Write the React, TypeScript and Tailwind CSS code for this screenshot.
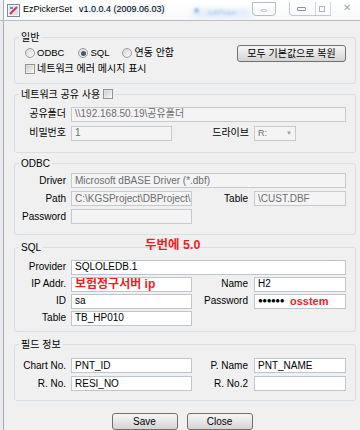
import React from "react";

const font = "font-['Liberation_Sans','Noto_Sans_CJK_KR',sans-serif]";

type BoxProps = {
  label: React.ReactNode;
  className: string;
  children: React.ReactNode;
};

const GroupBox = ({ label, className, children }: BoxProps) => {
  return (
    <div className={`relative border border-[#d5dfe5] rounded-[3px] ${className}`}>
      <div className="absolute -top-[7px] left-[4px] flex items-center gap-[3px] bg-[#f0f0f0] px-[2px] text-[10px] leading-[13px] text-black">
        {label}
      </div>
      {children}
    </div>
  );
};

const Field = ({
  value,
  disabled,
  className,
  children,
}: {
  value?: string;
  disabled?: boolean;
  className: string;
  children?: React.ReactNode;
}) => {
  return (
    <div
      className={`h-[15px] flex items-center px-[3px] border text-[10px] leading-none whitespace-nowrap overflow-hidden ${
        disabled
          ? "bg-[#f4f4f4] border-[#c6cacf] text-[#6d6d6d]"
          : "bg-white border-[#bfc5cc] text-black"
      } ${className}`}
    >
      {value}
      {children}
    </div>
  );
};

const Label = ({ text, className }: { text: string; className: string }) => (
  <span className={`text-[10px] leading-none text-right text-black whitespace-nowrap ${className}`}>
    {text}
  </span>
);

const Radio = ({ checked }: { checked?: boolean }) => (
  <span className="w-[10px] h-[10px] rounded-full border border-[#9b9b9b] bg-gradient-to-br from-[#d8d8d8] to-[#fbfbfb] flex items-center justify-center">
    {checked && <span className="w-[5px] h-[5px] rounded-full bg-[#3f5873]" />}
  </span>
);

const Check = () => (
  <span className="w-[10px] h-[10px] border border-[#949494] bg-gradient-to-br from-[#dcdcdc] to-[#f9f9f9] flex items-center justify-center">
    <span className="w-[6px] h-[6px] bg-gradient-to-br from-[#cfcfcf] to-[#f3f3f3]" />
  </span>
);

const Row = ({ children, className = "" }: { children: React.ReactNode; className?: string }) => (
  <div className={`flex items-center ${className}`}>{children}</div>
);

const App = () => {
  return (
    <div className={`w-[360px] h-[430px] overflow-hidden bg-[#f0f0f0] ${font}`}>
      {/* title bar */}
      <div className="h-[21px] flex items-center bg-gradient-to-b from-white to-[#f7f9fb] border-b border-[#b9bcc0] relative">
        <div className="w-[4px] h-full border-r border-[#a8abb0] bg-[#eef0f2]" />
        <svg width="13" height="13" viewBox="0 0 13 13" className="ml-[3px]">
          <rect x="0.5" y="0.5" width="12" height="12" fill="#f4f6fa" stroke="#7c8aa0" />
          <rect x="2" y="2" width="9" height="9" fill="#d7e3f3" />
          <path d="M3 10 L10 3" stroke="#d23a3a" strokeWidth="2" />
          <path d="M3 4 L6 4" stroke="#3a6fc4" strokeWidth="1.5" />
        </svg>
        <span className="ml-[3px] text-[9px] text-black whitespace-nowrap">EzPickerSet</span>
        <span className="ml-[7px] text-[9px] text-black whitespace-nowrap [text-shadow:0_0_3px_#b7d4f5]">
          v1.0.0.4 (2009.06.03)
        </span>
        <span className="absolute left-[192px] top-[9px] w-[60px] h-[9px] rounded-full bg-[#d6e6f8] blur-[3px] opacity-70" />
        <span className="absolute left-[194px] top-[8px] w-[5px] h-[5px] rounded-full bg-[#9fc3ea] blur-[1px]" />
        <span className="absolute left-[208px] top-[8px] text-[6.5px] text-[#a9c8ec] blur-[0.8px]">softPicker</span>
        <div className="absolute left-[252px] top-[2px] w-[24px] h-[14px] border border-[#b8bcc2] rounded-b-[4px] flex items-center justify-center text-[11px] leading-none text-[#7d8188]">
          ⇔
        </div>
        <div className="absolute left-[289px] top-[2px] w-[42px] h-[14px] border-l border-b border-[#c4c7cc] rounded-bl-[4px] flex items-center">
          <span className="ml-[7px] w-[9px] h-[4px] border border-[#8d9197] rounded-[1px]" />
          <span className="ml-[9px] w-px h-full bg-[#d3d6da]" />
          <span className="ml-[3px] w-[6px] h-[6px] border border-[#b2b6bb]" />
          <span className="ml-[5px] w-px h-full bg-[#d3d6da]" />
        </div>
        <span className="absolute left-[343px] top-[3px] text-[10px] leading-none text-[#a3a7ad]">✕</span>
      </div>

      {/* body */}
      <div className="flex h-[409px]">
        <div className="w-[4px] h-full border-r border-[#a9acb1] bg-[#e9ebee]" />
        <div className="flex-1 pl-[10px] pr-[4px] flex flex-col">
          <GroupBox label={<span>일반</span>} className="mt-[16px] h-[47px]">
            <div className="flex pt-[7px] pl-[10px] pr-[9px]">
              <div className="flex flex-col">
                <Row className="h-[16px] text-[10px] leading-none">
                  <Radio />
                  <span className="ml-[2px] text-[9.5px]">ODBC</span>
                  <span className="ml-[14px]" />
                  <Radio checked />
                  <span className="ml-[2px] text-[9.5px]">SQL</span>
                  <span className="ml-[13px]" />
                  <Radio />
                  <span className="ml-[2px]">연동 안함</span>
                </Row>
                <Row className="h-[16px] text-[10px] leading-none">
                  <Check />
                  <span className="ml-[2px]">네트워크 에러 메시지 표시</span>
                </Row>
              </div>
              <button className="ml-auto h-[17px] w-[109px] border border-[#707070] rounded-[3px] bg-gradient-to-b from-[#f6f6f6] via-[#e6e6e6] to-[#d3d3d3] text-[10px] leading-none text-black">
                모두 기본값으로 복원
              </button>
            </div>
          </GroupBox>

          <GroupBox
            label={
              <>
                <span>네트워크 공유 사용</span>
                <Check />
              </>
            }
            className="mt-[10px] h-[60px]"
          >
            <div className="flex flex-col gap-[4px] pt-[12px] pr-[9px]">
              <Row>
                <Label text="공유폴더" className="w-[51px]" />
                <Field disabled value="\\192.168.50.19\공유폴더" className="ml-[5px] flex-1" />
              </Row>
              <Row>
                <Label text="비밀번호" className="w-[51px]" />
                <Field disabled value="1" className="ml-[5px] w-[101px]" />
                <Label text="드라이브" className="w-[77px]" />
                <Field disabled className="ml-[5px] w-[42px] justify-between">
                  <span className="text-[9px]">R:</span>
                  <span className="text-[6px] text-[#9ca0a5]">▼</span>
                </Field>
              </Row>
            </div>
          </GroupBox>

          <GroupBox label={<span>ODBC</span>} className="mt-[10px] h-[72px]">
            <div className="flex flex-col gap-[3px] pt-[9px] pr-[9px]">
              <Row>
                <Label text="Driver" className="w-[51px]" />
                <Field disabled value="Microsoft dBASE Driver (*.dbf)" className="ml-[5px] flex-1" />
              </Row>
              <Row>
                <Label text="Path" className="w-[51px]" />
                <Field disabled value="C:\KGSProject\DBProject\" className="ml-[5px] w-[121px]" />
                <Label text="Table" className="w-[56px]" />
                <Field disabled value="\CUST.DBF" className="ml-[6px] flex-1" />
              </Row>
              <Row>
                <Label text="Password" className="w-[51px]" />
                <Field disabled className="ml-[5px] w-[121px]" />
              </Row>
            </div>
          </GroupBox>

          <GroupBox label={<span>SQL</span>} className="mt-[12px] h-[86px]">
            <span className="absolute left-[130px] -top-[9px] text-[12.5px] leading-none font-bold text-[#ee1c24]">
              두번에 5.0
            </span>
            <div className="flex flex-col gap-[2px] pt-[12px] pr-[9px]">
              <Row>
                <Label text="Provider" className="w-[51px]" />
                <Field value="SQLOLEDB.1" className="ml-[5px] flex-1" />
              </Row>
              <Row>
                <Label text="IP Addr." className="w-[51px]" />
                <Field className="ml-[5px] w-[121px]">
                  <span className="text-[12px] font-bold text-[#ee1c24]">보험청구서버 ip</span>
                </Field>
                <Label text="Name" className="w-[56px]" />
                <Field value="H2" className="ml-[6px] flex-1" />
              </Row>
              <Row>
                <Label text="ID" className="w-[51px]" />
                <Field value="sa" className="ml-[5px] w-[121px]" />
                <Label text="Password" className="w-[56px]" />
                <Field className="ml-[6px] flex-1">
                  <span className="text-[8px] tracking-[-0.5px]">●●●●●●</span>
                  <span className="ml-[6px] text-[11px] font-bold text-[#ee1c24]">osstem</span>
                </Field>
              </Row>
              <Row>
                <Label text="Table" className="w-[51px]" />
                <Field value="TB_HP010" className="ml-[5px] w-[121px]" />
              </Row>
            </div>
          </GroupBox>

          <GroupBox label={<span>필드 정보</span>} className="mt-[12px] h-[57px]">
            <div className="flex flex-col gap-[3px] pt-[13px] pr-[9px]">
              <Row>
                <Label text="Chart No." className="w-[51px]" />
                <Field value="PNT_ID" className="ml-[5px] w-[121px]" />
                <Label text="P. Name" className="w-[56px]" />
                <Field value="PNT_NAME" className="ml-[6px] flex-1" />
              </Row>
              <Row>
                <Label text="R. No." className="w-[51px]" />
                <Field value="RESI_NO" className="ml-[5px] w-[121px]" />
                <Label text="R. No.2" className="w-[56px]" />
                <Field className="ml-[6px] flex-1" />
              </Row>
            </div>
          </GroupBox>

          <div className="mt-[12px] flex justify-center gap-[9px] pr-[6px]">
            <button className="h-[17px] w-[66px] border border-[#707070] rounded-[3px] bg-gradient-to-b from-[#f6f6f6] via-[#e6e6e6] to-[#d3d3d3] text-[10px] leading-none text-black">
              Save
            </button>
            <button className="h-[17px] w-[66px] border border-[#707070] rounded-[3px] bg-gradient-to-b from-[#f6f6f6] via-[#e6e6e6] to-[#d3d3d3] text-[10px] leading-none text-black">
              Close
            </button>
          </div>
        </div>
      </div>
    </div>
  );
};

export default App;
